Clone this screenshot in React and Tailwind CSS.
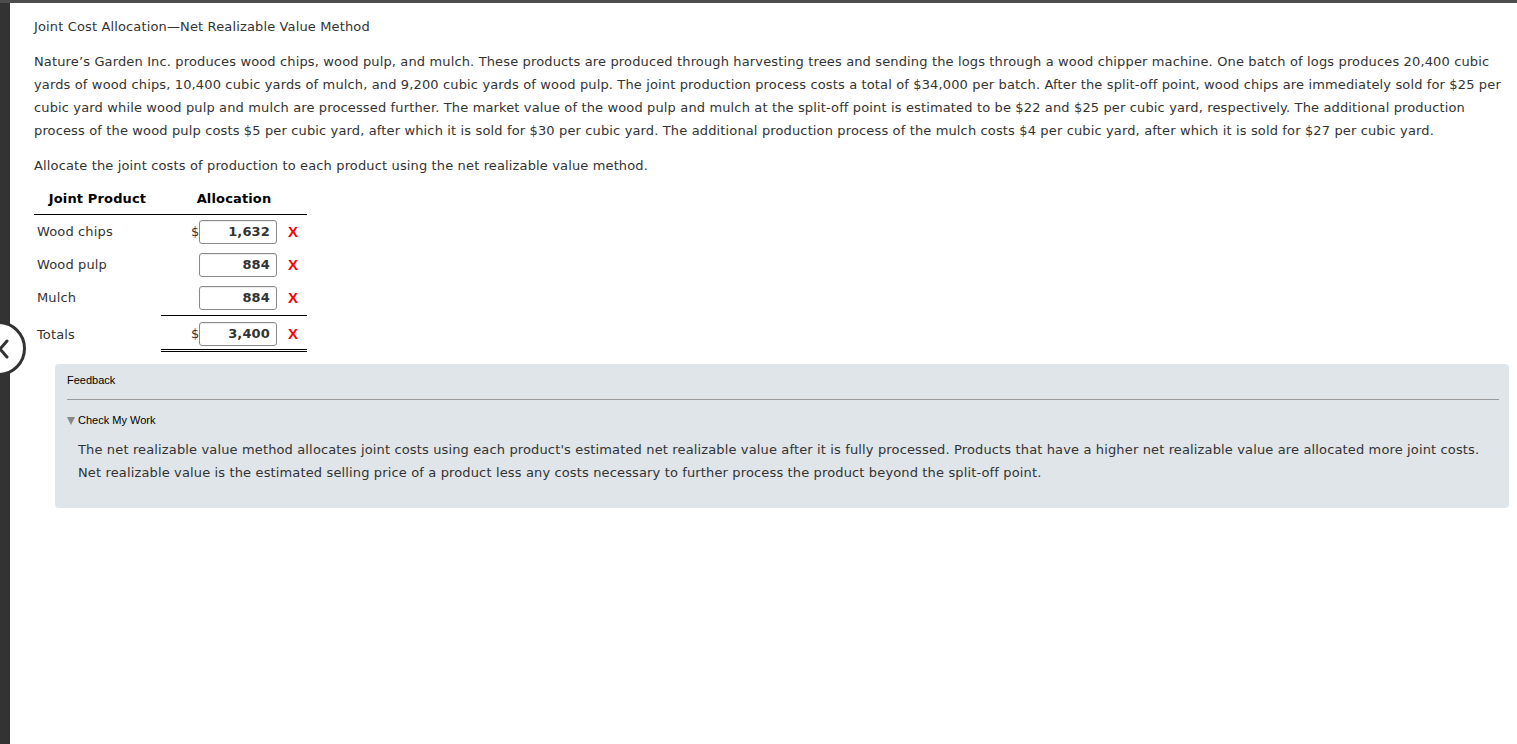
import React from "react";

const verdana = { fontFamily: '"DejaVu Sans", Verdana, sans-serif' };
const arial = { fontFamily: '"Liberation Sans", Arial, sans-serif' };

function Cell({ dollar, value }) {
  return (
    <div className="flex items-center justify-end pr-[9px] h-full">
      <span className="text-[13px] text-[#333] leading-none w-[7px] text-right mr-[1px]">{dollar ? "$" : ""}</span>
      <div className="w-[78px] h-[24px] border border-[#8a8a8a] rounded-[3px] bg-white flex items-center justify-end pr-[6px] text-[13px] font-bold text-[#333] shadow-[inset_0_1px_1px_rgba(0,0,0,0.08)]">
        {value}
      </div>
      <span className="ml-[11px] text-[#ff0000] font-bold text-[15px] leading-none tracking-normal" style={arial}>X</span>
    </div>
  );
}

export default function App() {
  return (
    <div className="relative w-[1517px] h-[744px] bg-white overflow-hidden flex flex-col tracking-[0.14px]" style={verdana}>
      <div className="h-[3px] w-full bg-[#4d4d4d] shrink-0" />
      <div className="flex flex-1 min-h-0">
        <div className="w-[10px] bg-[#333333] shrink-0" />
        <div className="flex-1 pl-[24px] pr-[8px] text-[#333] text-[13px]">
          <div className="pt-[12px] leading-[23px]">Joint Cost Allocation—Net Realizable Value Method</div>
          <p className="mt-[12px] leading-[23px] whitespace-nowrap">
            Nature’s Garden Inc. produces wood chips, wood pulp, and mulch. These products are produced through harvesting trees and sending the logs through a wood chipper machine. One batch of logs produces 20,400 cubic
            <br />
            yards of wood chips, 10,400 cubic yards of mulch, and 9,200 cubic yards of wood pulp. The joint production process costs a total of $34,000 per batch. After the split-off point, wood chips are immediately sold for $25 per
            <br />
            cubic yard while wood pulp and mulch are processed further. The market value of the wood pulp and mulch at the split-off point is estimated to be $22 and $25 per cubic yard, respectively. The additional production
            <br />
            process of the wood pulp costs $5 per cubic yard, after which it is sold for $30 per cubic yard. The additional production process of the mulch costs $4 per cubic yard, after which it is sold for $27 per cubic yard.
          </p>
          <p className="mt-[12px] leading-[23px]">Allocate the joint costs of production to each product using the net realizable value method.</p>

          <div className="mt-[10px] w-[273px] grid grid-cols-[127px_146px]">
            <div className="h-[28px] pb-[3px] border-b border-black flex items-center justify-center font-bold text-black">Joint Product</div>
            <div className="h-[28px] pb-[3px] border-b border-black flex items-center justify-center font-bold text-black">Allocation</div>

            <div className="h-[33px] flex items-center pl-[3px]">Wood chips</div>
            <div className="h-[33px]"><Cell dollar value="1,632" /></div>

            <div className="h-[33px] flex items-center pl-[3px]">Wood pulp</div>
            <div className="h-[33px]"><Cell value="884" /></div>

            <div className="h-[35px] flex items-center pl-[3px] pb-[1px]">Mulch</div>
            <div className="h-[35px] pb-[1px] border-b border-black"><Cell value="884" /></div>

            <div className="h-[36px] flex items-center pl-[3px] pt-[2px]">Totals</div>
            <div className="h-[36px] pt-[2px] border-b-[3px] border-double border-black"><Cell dollar value="3,400" /></div>
          </div>

          <div className="mt-[12px] ml-[21px] bg-[#dfe5e9] rounded-[4px] pl-[12px] pr-[10px] pt-[10px] pb-[24px]">
            <div className="text-[11px] text-black leading-[13px] pb-[12px] border-b border-[#9a9a9a] tracking-normal" style={arial}>Feedback</div>
            <div className="mt-[14px] flex items-center text-[11px] text-black leading-[13px] tracking-normal" style={arial}>
              <svg width="8" height="8" viewBox="0 0 8 8" className="mr-[3px]">
                <path d="M0 0 L8 0 L4 8 Z" fill="#888" />
              </svg>
              <span>Check My Work</span>
            </div>
            <p className="mt-[11px] pl-[11px] leading-[23px] whitespace-nowrap">
              The net realizable value method allocates joint costs using each product's estimated net realizable value after it is fully processed. Products that have a higher net realizable value are allocated more joint costs.
              <br />
              Net realizable value is the estimated selling price of a product less any costs necessary to further process the product beyond the split-off point.
            </p>
          </div>
        </div>
      </div>

      <div className="absolute left-[-29px] top-[321px] w-[55px] h-[55px] rounded-full border-[3px] border-[#333] bg-white">
        <svg width="12" height="20" viewBox="0 0 12 20" fill="none" className="absolute left-[23px] top-[15px]">
          <path d="M10 2 L3 10 L10 18" stroke="#333" strokeWidth="3" strokeLinecap="round" strokeLinejoin="round" />
        </svg>
      </div>
    </div>
  );
}
